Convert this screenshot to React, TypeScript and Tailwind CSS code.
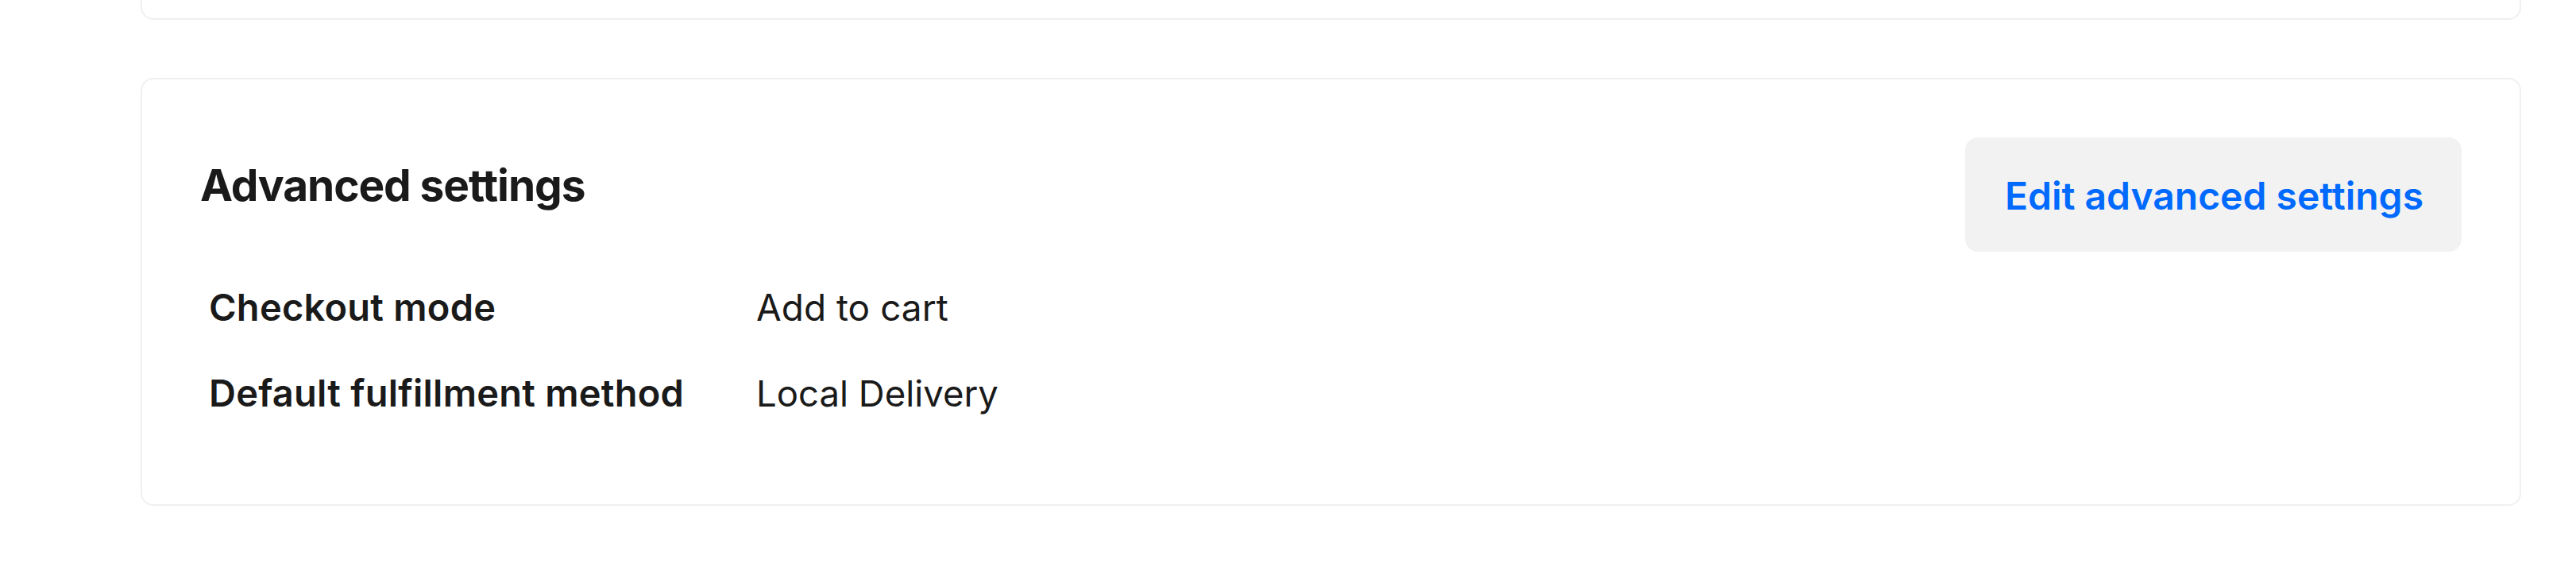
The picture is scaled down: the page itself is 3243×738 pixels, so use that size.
import React from "react";

export default function App() {
  const font = { fontFamily: "Inter, 'Noto Sans', 'Liberation Sans', sans-serif" };
  return (
    <div className="w-[3243px] h-[738px] bg-white overflow-hidden text-[#1a1a1a]" style={font}>
      <div className="ml-[177px] w-[2997px] h-[25px] border-2 border-t-0 border-[#f0f0f0] rounded-b-[16px]" />
      <div className="ml-[177px] mt-[73px] w-[2997px] h-[539px] border-2 border-[#f0f0f0] rounded-[16px] px-[73px] pt-[73px]">
        <div className="flex justify-between items-start">
          <div className="flex flex-col">
            <h2 className="mt-[27px] text-[55px] leading-[66px] font-bold tracking-[-0.02em]">Advanced settings</h2>
            <div className="mt-[91px] pl-[11px] flex flex-col gap-[48px]">
              <div className="flex items-baseline leading-[60px]">
                <div className="w-[689px] text-[47px] font-semibold tracking-[0.005em]">Checkout mode</div>
                <div className="text-[46px]">Add to cart</div>
              </div>
              <div className="flex items-baseline leading-[60px]">
                <div className="w-[689px] text-[47px] font-semibold tracking-[0.005em]">Default fulfillment method</div>
                <div className="text-[45.5px]">Local Delivery</div>
              </div>
            </div>
          </div>
          <button className="h-[144px] pl-[50px] pr-[48px] pt-[4px] rounded-[16px] bg-[#f2f2f2] text-[#006aff] text-[48px] leading-[60px] font-semibold flex items-center">
            Edit advanced settings
          </button>
        </div>
      </div>
    </div>
  );
}
